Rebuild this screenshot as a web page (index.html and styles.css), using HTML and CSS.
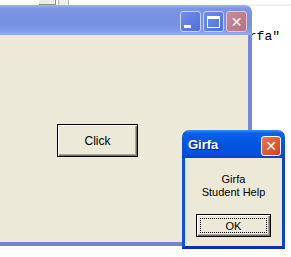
FILE: index.html
```html
<!DOCTYPE html>
<html lang="en">
<head>
    <meta charset="UTF-8">
    <title>Girfa</title>
    <link rel="stylesheet" href="styles.css">
</head>
<body>
    <div class="desktop">
        <!-- окно редактора позади -->
        <div class="editor-strip">
            <span class="strip-btn"></span>
            <span class="strip-split"></span>
        </div>
        <div class="code-line">"Girfa"</div>

        <!-- главное окно (неактивное) -->
        <div class="window main-window">
            <div class="titlebar inactive">
                <div class="title-buttons">
                    <span class="tbtn min"><span class="glyph-min"></span></span>
                    <span class="tbtn max"><span class="glyph-max"></span></span>
                    <span class="tbtn close">&#x2715;</span>
                </div>
            </div>
            <div class="client">
                <button class="xp-btn click-btn">Click</button>
            </div>
        </div>

        <!-- диалог сообщения -->
        <div class="window dialog">
            <div class="titlebar active">
                <span class="title-text">Girfa</span>
                <span class="tbtn close active-close">&#x2715;</span>
            </div>
            <div class="dialog-client">
                <p class="message">Girfa<br>Student Help</p>
                <button class="xp-btn ok-btn"><span class="focus">OK</span></button>
            </div>
        </div>
    </div>
</body>
</html>
```

FILE: styles.css
```css
* {
    margin: 0;
    padding: 0;
    box-sizing: border-box;
}

body {
    background: #fff;
    font-family: "Liberation Sans", Arial, sans-serif;
    overflow: hidden;
}

.desktop {
    position: relative;
    width: 291px;
    height: 257px;
    overflow: hidden;
    background: #fff;
}

/* Фон: кусок другого окна */
.editor-strip {
    height: 6px;
    display: flex;
    align-items: flex-start;
    background: linear-gradient(#fff 0, #fff 60%, #e6e6e6 100%);
}

.strip-btn {
    width: 17px;
    height: 5px;
    margin-left: 39px;
    background: #ecebe4;
    border-right: 1px solid #8f8f86;
    border-bottom: 1px solid #8f8f86;
}

.strip-split {
    width: 11px;
    height: 6px;
    margin-left: 2px;
    background: #efeee6;
    border-left: 1px solid #b9b8ae;
    border-right: 1px solid #b9b8ae;
}

.code-line {
    position: absolute;
    right: 11px;
    top: 29px;
    font-family: "Liberation Mono", "Courier New", monospace;
    font-size: 13px;
    line-height: 15px;
    color: #000;
}

/* Окна */
.window {
    position: absolute;
    display: flex;
    flex-direction: column;
}

.main-window {
    left: -10px;
    top: 5px;
    width: 262px;
    height: 241px;
}

.titlebar {
    display: flex;
    align-items: flex-start;
    border-radius: 7px 7px 0 0;
}

.titlebar.inactive {
    height: 30px;
    justify-content: flex-end;
    padding: 6px 5px 0 0;
    background: linear-gradient(#9fb3f0 0, #7b95e3 12%, #7690e1 60%, #7e9ae6 85%, #92adee 100%);
}

.title-buttons {
    display: flex;
    gap: 2px;
}

.tbtn {
    width: 21px;
    height: 21px;
    border-radius: 3px;
    display: flex;
    align-items: center;
    justify-content: center;
    color: #fff;
    font-size: 15px;
    font-weight: bold;
    line-height: 1;
}

.tbtn.min,
.tbtn.max {
    background: linear-gradient(135deg, #6f8fe9, #4f6fdc);
    border: 1px solid #c9d4f7;
}

.tbtn.close {
    background: linear-gradient(135deg, #c88c9e, #b5717f);
    border: 1px solid #e2c6d2;
    font-family: "DejaVu Sans", sans-serif;
    font-size: 14px;
}

.glyph-min {
    width: 7px;
    height: 3px;
    background: #fff;
    margin: 9px 6px 0 0;
}

.glyph-max {
    width: 13px;
    height: 12px;
    border: 1px solid #fff;
    border-top-width: 3px;
}

.client {
    flex: 1;
    background: #ece9d8;
    border-right: 4px solid #7886d8;
    border-bottom: 4px solid #7681d6;
    padding: 89px 0 0 67px;
}

/* Кнопки в стиле XP */
.xp-btn {
    display: flex;
    align-items: center;
    justify-content: center;
    font-family: "Liberation Sans", Arial, sans-serif;
    font-size: 11px;
    color: #000;
    background: #ece9d8;
    border: 1px solid #000;
    box-shadow: inset 1px 1px 0 #fff, inset -1px -1px 0 #716f64, inset -2px -2px 0 #aca899;
}

.click-btn {
    width: 81px;
    height: 33px;
    font-size: 12px;
}

/* Диалог */
.dialog {
    left: 182px;
    top: 130px;
    width: 103px;
    height: 119px;
}

.titlebar.active {
    height: 28px;
    justify-content: space-between;
    padding: 6px 4px 0 6px;
    background: linear-gradient(#3d8ef7 0, #0a5fe8 12%, #0454e0 50%, #0350dc 85%, #0843c6 100%);
}

.title-text {
    color: #fff;
    font-weight: bold;
    font-size: 13px;
    line-height: 16px;
    margin-top: 1px;
    text-shadow: 1px 1px 0 #0a1e8a;
}

.active-close {
    width: 20px;
    height: 20px;
    background: linear-gradient(135deg, #e8785a, #d2401c) !important;
    border: 1px solid #fff !important;
}

.dialog-client {
    flex: 1;
    background: #ece9d8;
    border-left: 3px solid #0b50e8;
    border-right: 3px solid #0b44d0;
    border-bottom: 3px solid #0a2fb3;
    display: flex;
    flex-direction: column;
    align-items: center;
}

.message {
    margin-top: 15px;
    font-size: 11px;
    line-height: 13px;
    text-align: center;
    color: #000;
}

.ok-btn {
    width: 75px;
    height: 23px;
    margin-top: 15px;
    padding: 3px;
}

.focus {
    width: 100%;
    height: 100%;
    display: flex;
    align-items: center;
    justify-content: center;
    border: 1px dotted #000;
}
```
